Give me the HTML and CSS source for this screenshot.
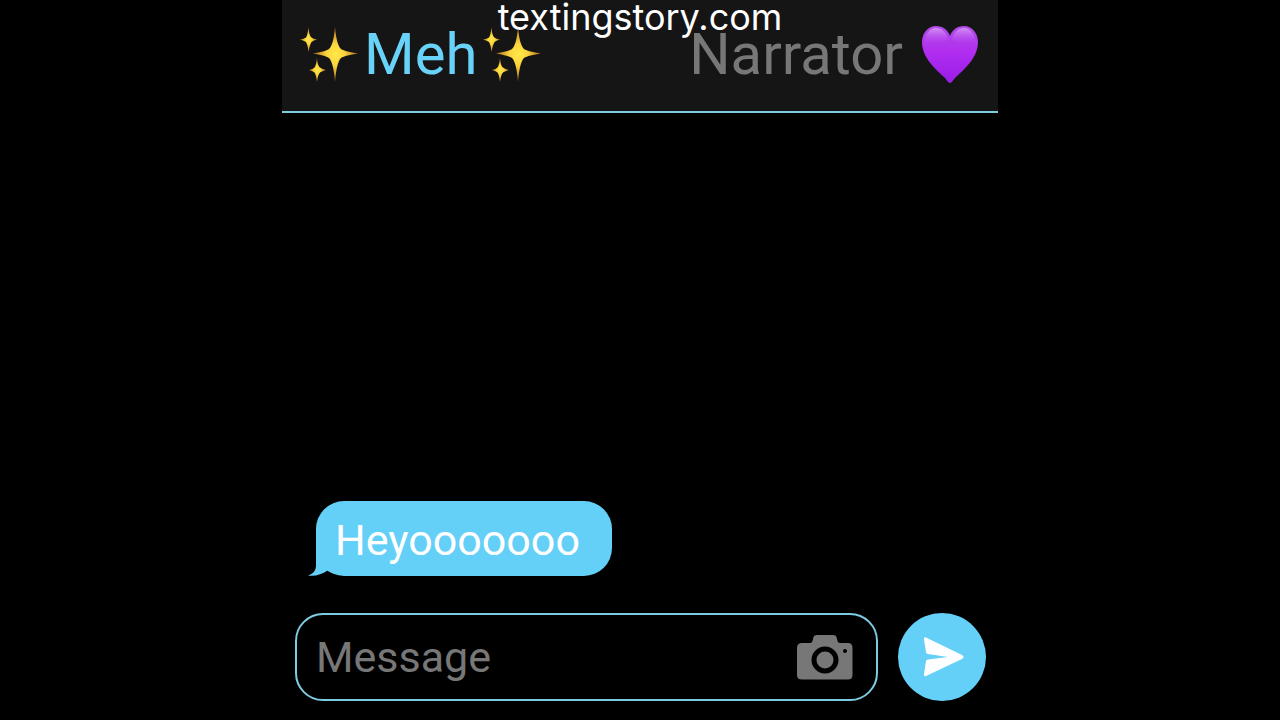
FILE: index.html
```html
<!DOCTYPE html>
<html lang="en">
<head>
    <meta charset="UTF-8">
    <meta name="viewport" content="width=device-width, initial-scale=1.0">
    <title>Texting Story</title>
    <link rel="stylesheet" href="styles.css">
</head>
<body>

    <!-- Shared gradients and the sparkle shape -->
    <svg class="defs" width="0" height="0" aria-hidden="true">
        <defs>
            <radialGradient id="gold">
                <stop offset="0" stop-color="#ffe94a"/>
                <stop offset="0.4" stop-color="#fbd43c"/>
                <stop offset="1" stop-color="#b06a20"/>
            </radialGradient>
            <linearGradient id="purple" x1="0" y1="0" x2="0" y2="1">
                <stop offset="0" stop-color="#b04de6"/>
                <stop offset="0.45" stop-color="#b12ef0"/>
                <stop offset="1" stop-color="#9a1ce8"/>
            </linearGradient>
            <linearGradient id="shine" x1="0" y1="0" x2="0" y2="1">
                <stop offset="0" stop-color="#dca0fa" stop-opacity="0.8"/>
                <stop offset="1" stop-color="#c050f5" stop-opacity="0"/>
            </linearGradient>
            <symbol id="sparkles" viewBox="0 0 60 58">
                <path fill="url(#gold)" d="M36 1C37 13 39 20 42 23C45 25 51 26 59 27.500C51 29 45 30 42 32C39 35 37 43 36 56C35 43 33 35 30 32C27 30 22 29 14 27.500C22 26 27 25 30 23C33 20 35 13 36 1Z"/>
                <path fill="url(#gold)" d="M9.500 1C10 8 11 10 12.500 11.500Q14 13 18 13.500Q14 14.500 12.500 16Q11 18 9.500 26Q8.500 18 7 16Q5 14.500 1 13.500Q5 13 7 11.500Q8.500 10 9.500 1Z"/>
                <path fill="url(#gold)" d="M18 32C18.500 38 19.500 40 21 41.500Q23 43 27 44Q23 45 21 46.500Q19 48 18 56Q17 48 15.500 46.500Q14 45 10 44Q14 43 15.500 41.500Q17 40 18 32Z"/>
            </symbol>
        </defs>
    </svg>

    <main class="phone">
        <div class="watermark">textingstory.com</div>

        <header class="header">
            <button class="name active" type="button">
                <svg class="sparkles" role="img" aria-label="sparkles"><use href="#sparkles"/></svg>
                <span>Meh</span>
                <svg class="sparkles" role="img" aria-label="sparkles"><use href="#sparkles"/></svg>
            </button>
            <button class="name narrator" type="button">
                <span>Narrator</span>
                <svg class="heart" viewBox="0 0 58 58" role="img" aria-label="purple heart">
                    <path fill="url(#purple)" d="M29 57C27.500 57 26 54 23 51C14 43 1 31 1 16C1 7 7 0 15 0C22 0 27 4 29 10C31 4 36 0 43 0C51 0 57 7 57 16C57 31 44 43 35 51C32 54 30.500 57 29 57Z"/>
                    <path fill="url(#shine)" d="M4 15C4 8 9 2 15 2C21 2 25 6 27 13C23 18 9 20 4 15Z"/>
                    <path fill="url(#shine)" d="M54 15C54 8 49 2 43 2C37 2 33 6 31 13C35 18 49 20 54 15Z"/>
                </svg>
            </button>
        </header>

        <section class="messages">
            <div class="bubble">
                Heyooooooo
                <svg class="tail" viewBox="0 0 24 28" aria-hidden="true">
                    <path d="M0 27.500C5 26 8 23 8 17V0H24V25L19.500 22.500C14 26.500 7 28.500 0 27.500Z"/>
                </svg>
            </div>
        </section>

        <form class="composer">
            <div class="field">
                <input class="message-input" type="text" placeholder="Message" aria-label="Message">
                <button class="camera" type="button" aria-label="Add photo">
                    <svg viewBox="0 0 56 46" aria-hidden="true">
                        <path fill="#777" d="M5 9H13Q15 9 15.500 7L16.500 3Q17 1 20 1H36Q39 1 39.500 3L40.500 7Q41 9 43 9H51Q55.500 9 55.500 14V41Q55.500 45.500 51 45.500H5Q0 45.500 0 41V14Q0 9 5 9Z"/>
                        <circle cx="28" cy="26" r="11" fill="#777" stroke="#000" stroke-width="5"/>
                        <circle cx="48" cy="17" r="2" fill="#000"/>
                    </svg>
                </button>
            </div>
            <button class="send" type="button" aria-label="Send">
                <svg viewBox="0 0 88 88" aria-hidden="true">
                    <path fill="#fff" d="M28 24.500L64 42Q67 44 64 46L28 63Q25.500 64 26 61L28 48Q28 46.500 30 46.500L50 44L30 41Q28 41 28 39L26 26.500Q25.500 23.500 28 24.500Z"/>
                </svg>
            </button>
        </form>
    </main>

</body>
</html>
```

FILE: styles.css
```css
* {
    box-sizing: border-box;
}

body {
    margin: 0;
    background-color: #000;
    font-family: Roboto, "Liberation Sans", sans-serif;
}

button {
    padding: 0;
    border: 0;
    background: none;
    font: inherit;
    cursor: pointer;
}

svg {
    display: block;
}

.defs {
    position: absolute;
}

.phone {
    position: relative;
    display: flex;
    flex-direction: column;
    width: 100%;
    max-width: 716px;
    min-height: 100vh;
    margin: 0 auto;
}

/* Sits over the header */
.watermark {
    position: absolute;
    top: 0;
    left: 0;
    right: 0;
    z-index: 1;
    color: #fff;
    font-family: Inter, "Liberation Sans", sans-serif;
    font-size: 36px;
    line-height: 34px;
    text-align: center;
}

.header {
    display: flex;
    justify-content: space-between;
    padding: 18px 19px 20px 17px;
    border-bottom: 2px solid #7ccbe0;
    background-color: #151515;
}

.name {
    display: flex;
    align-items: center;
    gap: 5px;
    color: #777;
    font-size: 58px;
    line-height: 73px;
}

.active {
    color: #69d2f9;
}

.narrator {
    gap: 18px;
}

.sparkles {
    width: 60px;
    height: 58px;
}

.heart {
    width: 58px;
    height: 58px;
}

.messages {
    flex: 1;
    display: flex;
    flex-direction: column;
    justify-content: flex-end;
    align-items: flex-start;
    padding: 37px 34px;
}

.bubble {
    position: relative;
    padding: 12px 32px 9px 19px;
    border-radius: 28px;
    background-color: #65d0f7;
    color: #fff;
    font-size: 43px;
    line-height: 54px;
}

.tail {
    position: absolute;
    left: -8px;
    bottom: 0;
    width: 24px;
    height: 28px;
    fill: #65d0f7;
}

.composer {
    display: flex;
    gap: 20px;
    padding: 0 12px 19px 13px;
}

.field {
    flex: 1;
    display: flex;
    align-items: center;
    min-width: 0;
    height: 88px;
    padding: 0 23px 0 19px;
    border: 2px solid #7ccbe0;
    border-radius: 28px;
}

.message-input {
    flex: 1;
    min-width: 0;
    padding: 0;
    border: 0;
    outline: 0;
    background: none;
    color: #fff;
    font: inherit;
    font-size: 43px;
}

.message-input::placeholder {
    color: #777;
    opacity: 1;
}

.camera svg {
    width: 56px;
    height: 46px;
}

.send {
    width: 88px;
    height: 88px;
    border-radius: 50%;
    background-color: #65d0f7;
}
```
